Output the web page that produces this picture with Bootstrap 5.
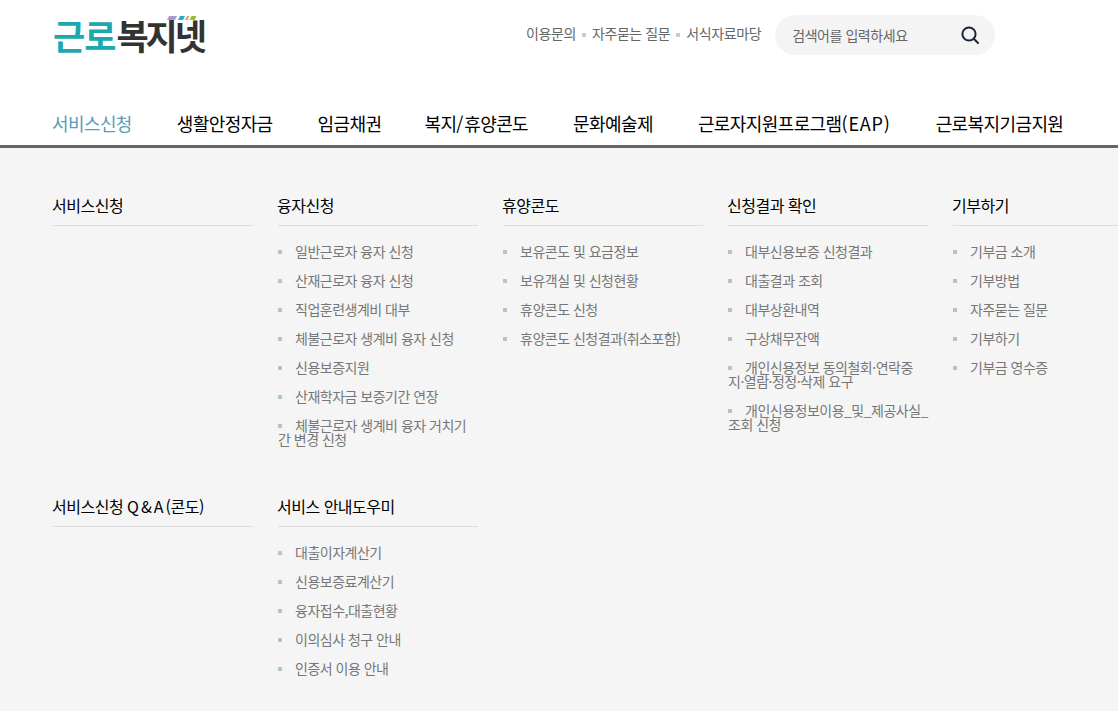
<!DOCTYPE html>
<html lang="ko">
<head>
<meta charset="utf-8">
<title>근로복지넷</title>
<link rel="stylesheet" href="https://cdn.jsdelivr.net/npm/bootstrap@5.3.0/dist/css/bootstrap.min.css">
<style>
html,body{height:711px;overflow:hidden}
body{font-family:"Noto Sans CJK KR","Noto Sans",sans-serif;background:#fff;color:#000}
.top-zone{height:97px;padding-left:53px;padding-top:9px}
.site-logo{position:relative;width:160px;font-size:35px;line-height:52px;font-weight:700;white-space:nowrap}
.logo-teal{color:#1ba9ae;letter-spacing:-1px;margin-right:1px}
.logo-dark{color:#333;letter-spacing:-3px}
.logo-stripes{position:absolute;left:114px;top:7px}
.util-zone{position:absolute;left:526px;top:15px;height:40px}
.util-link{font-size:14px;color:#666;letter-spacing:-.4px;text-decoration:none;line-height:20px;padding-bottom:4px}
.util-dot{width:4px;height:4px;background:#ccc;margin:0 6px}
.search-pill{width:220px;height:40px;border-radius:20px;background:#f4f4f4;margin-left:14px;padding:0 15px 0 17px}
.search-text{font-size:14px;color:#666;letter-spacing:-.45px}
.gnb-row{padding-left:52px;gap:45px;height:51px;padding-top:13px;border-bottom:3px solid #666}
.gnb-link{font-size:18px;line-height:26px;color:#000;text-decoration:none;white-space:nowrap;letter-spacing:-.6px}
.gnb-link.is-on{color:#5a9db5}
.gnb-tight{margin-right:-2px}
.latin-wide{letter-spacing:.8px}
.sub-panel{background:#f5f5f5;height:563px;padding:45px 0 0 53px;overflow:hidden}
.sub-grid{width:1125px}
.sub-col{width:200px;margin-right:25px;margin-bottom:41px}
.sub-title{font-size:16px;line-height:24px;height:33px;border-bottom:1px solid #ddd;margin:0 0 10px;font-weight:400;color:#000;letter-spacing:-.5px;text-indent:-1px}
.sub-title .latin-wide{letter-spacing:2px}
.sub-list{margin:0;padding:0;list-style:none}
.sub-list li{font-size:14px;line-height:14px;padding:8px 0 7px;color:#777;letter-spacing:-.5px}
.sub-list li::before{content:"";display:inline-block;width:4px;height:4px;background:#aec9c5;margin:0 13px 3px 0}
</style>
</head>
<body>
<header class="position-relative">
  <div class="top-zone">
    <div class="site-logo">
      <span class="logo-teal">근로</span><span class="logo-dark">복지넷</span>
      <svg class="logo-stripes" width="30" height="5" viewBox="0 0 30 5"><path d="M2 0h8l-2 4H0z" fill="#a99bd0"/><path d="M13 0h5l-2 4h-5z" fill="#2aa8d8"/><path d="M20 0h2.500l-2 4h-2.500z" fill="#f0a050"/><path d="M24.500 0h5l-2 4h-5z" fill="#8fbf3f"/></svg>
    </div>
  </div>
  <div class="util-zone d-flex align-items-center">
    <a class="util-link" href="#">이용문의</a><span class="util-dot"></span>
    <a class="util-link" href="#">자주묻는 질문</a><span class="util-dot"></span>
    <a class="util-link" href="#">서식자료마당</a>
    <div class="search-pill d-flex align-items-center justify-content-between">
      <span class="search-text">검색어를 입력하세요</span>
      <svg width="20" height="20" viewBox="0 0 20 20" fill="none" stroke="#1c2238" stroke-width="2"><circle cx="9" cy="9" r="6.600"/><path d="M14 14l4 4" stroke-linecap="round"/></svg>
    </div>
  </div>
  <nav class="gnb-row d-flex">
    <a class="gnb-link is-on" href="#">서비스신청</a>
    <a class="gnb-link" href="#">생활안정자금</a>
    <a class="gnb-link gnb-tight" href="#">임금채권</a>
    <a class="gnb-link" href="#">복지<span class="latin-wide">/</span>휴양콘도</a>
    <a class="gnb-link" href="#">문화예술제</a>
    <a class="gnb-link" href="#">근로자지원프로그램<span class="latin-wide">(EAP)</span></a>
    <a class="gnb-link" href="#">근로복지기금지원</a>
  </nav>
</header>
<main class="sub-panel">
  <div class="sub-grid d-flex flex-wrap align-items-start">
    <section class="sub-col"><h2 class="sub-title">서비스신청</h2></section>
    <section class="sub-col"><h2 class="sub-title">융자신청</h2>
      <ul class="sub-list"><li>일반근로자 융자 신청</li><li>산재근로자 융자 신청</li><li>직업훈련생계비 대부</li><li>체불근로자 생계비 융자 신청</li><li>신용보증지원</li><li>산재학자금 보증기간 연장</li><li>체불근로자 생계비 융자 거치기<br>간 변경 신청</li></ul></section>
    <section class="sub-col"><h2 class="sub-title">휴양콘도</h2>
      <ul class="sub-list"><li>보유콘도 및 요금정보</li><li>보유객실 및 신청현황</li><li>휴양콘도 신청</li><li>휴양콘도 신청결과(취소포함)</li></ul></section>
    <section class="sub-col"><h2 class="sub-title">신청결과 확인</h2>
      <ul class="sub-list"><li>대부신용보증 신청결과</li><li>대출결과 조회</li><li>대부상환내역</li><li>구상채무잔액</li><li>개인신용정보 동의철회·연락중<br>지·열람·정정·삭제 요구</li><li>개인신용정보이용_및_제공사실_<br>조회 신청</li></ul></section>
    <section class="sub-col"><h2 class="sub-title">기부하기</h2>
      <ul class="sub-list"><li>기부금 소개</li><li>기부방법</li><li>자주묻는 질문</li><li>기부하기</li><li>기부금 영수증</li></ul></section>
    <section class="sub-col"><h2 class="sub-title">서비스신청 <span class="latin-wide">Q&amp;A</span>(콘도)</h2></section>
    <section class="sub-col"><h2 class="sub-title">서비스 안내도우미</h2>
      <ul class="sub-list"><li>대출이자계산기</li><li>신용보증료계산기</li><li>융자접수,대출현황</li><li>이의심사 청구 안내</li><li>인증서 이용 안내</li></ul></section>
  </div>
</main>
</body>
</html>
